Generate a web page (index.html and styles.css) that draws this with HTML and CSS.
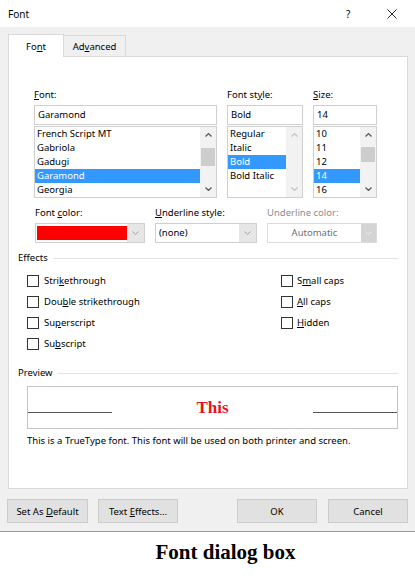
FILE: index.html
```html
<!DOCTYPE html>
<html>
<head>
<meta charset="utf-8">
<link rel="stylesheet" href="styles.css">
</head>
<body>
<div class="titlebar">
  <span class="title">Font</span>
  <span class="help">?</span>
  <span class="close"><svg width="10" height="10" viewBox="0 0 10 10"><path d="M0.5 0.5L9.5 9.5M9.5 0.5L0.5 9.5" stroke="#222" stroke-width="1" fill="none"/></svg></span>
</div>
<div class="dialog">
  <div class="tabs">
    <div class="tab active"><span>Fo<u>n</u>t</span></div>
    <div class="tab"><span>Ad<u>v</u>anced</span></div>
  </div>
  <div class="panel">
    <div class="font-grid">
      <div class="col">
        <div class="label"><u>F</u>ont:</div>
        <div class="input">Garamond</div>
        <div class="list">
          <div class="items">
            <div class="item">French Script MT</div>
            <div class="item">Gabriola</div>
            <div class="item">Gadugi</div>
            <div class="item sel">Garamond</div>
            <div class="item">Georgia</div>
          </div>
          <div class="scroll">
            <div class="sbtn"><svg width="7" height="4" viewBox="0 0 7 4"><path d="M0.5 3.5L3.5 0.6L6.5 3.5" fill="none" stroke="#555" stroke-width="1.3"/></svg></div>
            <div class="track"><div class="thumb thumb-font"></div></div>
            <div class="sbtn"><svg width="7" height="4" viewBox="0 0 7 4"><path d="M0.5 0.5L3.5 3.4L6.5 0.5" fill="none" stroke="#555" stroke-width="1.3"/></svg></div>
          </div>
        </div>
      </div>
      <div class="col">
        <div class="label">Font st<u>y</u>le:</div>
        <div class="input">Bold</div>
        <div class="list">
          <div class="items">
            <div class="item">Regular</div>
            <div class="item">Italic</div>
            <div class="item sel">Bold</div>
            <div class="item">Bold Italic</div>
          </div>
          <div class="scroll">
            <div class="sbtn"><svg width="7" height="4" viewBox="0 0 7 4"><path d="M0.5 3.5L3.5 0.6L6.5 3.5" fill="none" stroke="#c4c4c4" stroke-width="1.3"/></svg></div>
            <div class="track"></div>
            <div class="sbtn"><svg width="7" height="4" viewBox="0 0 7 4"><path d="M0.5 0.5L3.5 3.4L6.5 0.5" fill="none" stroke="#c4c4c4" stroke-width="1.3"/></svg></div>
          </div>
        </div>
      </div>
      <div class="col">
        <div class="label"><u>S</u>ize:</div>
        <div class="input">14</div>
        <div class="list">
          <div class="items">
            <div class="item">10</div>
            <div class="item">11</div>
            <div class="item">12</div>
            <div class="item sel">14</div>
            <div class="item">16</div>
            <div class="item-edge"></div>
          </div>
          <div class="scroll">
            <div class="sbtn"><svg width="7" height="4" viewBox="0 0 7 4"><path d="M0.5 3.5L3.5 0.6L6.5 3.5" fill="none" stroke="#555" stroke-width="1.3"/></svg></div>
            <div class="track"><div class="thumb thumb-size"></div></div>
            <div class="sbtn"><svg width="7" height="4" viewBox="0 0 7 4"><path d="M0.5 0.5L3.5 3.4L6.5 0.5" fill="none" stroke="#555" stroke-width="1.3"/></svg></div>
          </div>
        </div>
      </div>
    </div>

    <div class="color-grid">
      <div class="col">
        <div class="label">Font <u>c</u>olor:</div>
        <div class="combo">
          <div class="swatch"><div class="red"></div></div>
          <div class="arrow"><svg width="7" height="4" viewBox="0 0 7 4"><path d="M0.5 0.5L3.5 3.4L6.5 0.5" fill="none" stroke="#a0a0a0" stroke-width="1"/></svg></div>
        </div>
      </div>
      <div class="col">
        <div class="label"><u>U</u>nderline style:</div>
        <div class="combo">
          <div class="value">(none)</div>
          <div class="arrow"><svg width="7" height="4" viewBox="0 0 7 4"><path d="M0.5 0.5L3.5 3.4L6.5 0.5" fill="none" stroke="#a0a0a0" stroke-width="1"/></svg></div>
        </div>
      </div>
      <div class="col">
        <div class="label disabled">Underline color:</div>
        <div class="combo combo-disabled">
          <div class="value center">Automatic</div>
          <div class="arrow"><svg width="7" height="4" viewBox="0 0 7 4"><path d="M0.5 0.5L3.5 3.4L6.5 0.5" fill="none" stroke="#ebebeb" stroke-width="1"/></svg></div>
        </div>
      </div>
    </div>

    <div class="group effects">
      <div class="legend"><span>Effects</span><div class="rule"></div></div>
      <div class="checks">
        <div class="check"><span class="box"></span><span>Stri<u>k</u>ethrough</span></div>
        <div class="check"><span class="box"></span><span>S<u>m</u>all caps</span></div>
        <div class="check"><span class="box"></span><span>Dou<u>b</u>le strikethrough</span></div>
        <div class="check"><span class="box"></span><span><u>A</u>ll caps</span></div>
        <div class="check"><span class="box"></span><span>Su<u>p</u>erscript</span></div>
        <div class="check"><span class="box"></span><span><u>H</u>idden</span></div>
        <div class="check"><span class="box"></span><span>Su<u>b</u>script</span></div>
      </div>
    </div>

    <div class="group preview">
      <div class="legend"><span>Preview</span><div class="rule"></div></div>
      <div class="preview-box">
        <div class="pline"></div>
        <div class="ptext">This</div>
        <div class="pline"></div>
      </div>
      <div class="desc">This is a TrueType font. This font will be used on both printer and screen.</div>
    </div>
  </div>
  <div class="buttons">
    <div class="btn btn-default"><span>Set As <u>D</u>efault</span></div>
    <div class="btn btn-effects"><span>Text <u>E</u>ffects...</span></div>
    <div class="spacer"></div>
    <div class="btn"><span>OK</span></div>
    <div class="btn"><span>Cancel</span></div>
  </div>
</div>
<div class="caption">Font dialog box</div>
</body>
</html>
```

FILE: styles.css
```css
* { box-sizing: border-box; }
html, body { margin: 0; padding: 0; background: #fff; }
body {
  width: 415px;
  height: 578px;
  overflow: hidden;
  font-family: "Noto Sans", "Open Sans", sans-serif;
  font-size: 9.5px;
  color: #000;
}
u { text-decoration: underline; text-underline-offset: 1px; }

.titlebar {
  height: 27px;
  display: flex;
  align-items: center;
  background: #fff;
  padding-left: 8px;
}
.title { font-size: 10px; flex: 1; }
.help { font-size: 10px; width: 10px; margin-right: 31px; }
.close { width: 10px; height: 10px; margin-right: 18px; display: flex; }

.dialog {
  background: #f0f0f0;
  padding: 7px 0 8px 0;
  border-bottom: 1px solid #7f9dbf;
}
.tabs {
  display: flex;
  height: 22px;
  padding-left: 8px;
  align-items: flex-end;
}
.tab {
  height: 21px;
  width: 63px;
  border: 1px solid #d9d9d9;
  border-bottom: none;
  background: #f0f0f0;
  display: flex;
  align-items: center;
  justify-content: center;
  font-size: 9.5px;
  margin-left: -1px;
}
.tab.active {
  width: 56px;
  height: 23px;
  margin-left: 0;
  margin-bottom: -1px;
  background: #fff;
  position: relative;
  z-index: 1;
  padding-top: 1px;
}

.panel {
  margin-left: 8px;
  width: 400px;
  height: 433px;
  background: #fff;
  border: 1px solid #d9d9d9;
}

.font-grid {
  display: grid;
  grid-template-columns: 183px 76px 64px;
  column-gap: 10px;
  margin-top: 31px;
  padding-left: 25px;
}
.label {
  height: 14px;
  line-height: 14px;
  margin-bottom: 3px;
  white-space: nowrap;
}
.label.disabled { color: #8c8c8c; }
.input {
  height: 20px;
  border: 1px solid #cfcfcf;
  line-height: 18px;
  padding-left: 3px;
}
.list {
  margin-top: 1px;
  height: 72px;
  border: 1px solid #cfcfcf;
  display: flex;
  overflow: hidden;
}
.items { flex: 1; overflow: hidden; }
.item {
  height: 14px;
  line-height: 14px;
  padding-left: 2px;
  white-space: nowrap;
}
.item.sel { background: #3399ff; color: #fff; }
.item-edge { height: 2px; background: #3399ff; }
.scroll {
  width: 16px;
  background: #f2f2f2;
  display: flex;
  flex-direction: column;
}
.sbtn {
  height: 16px;
  display: flex;
  align-items: center;
  justify-content: center;
}
.track { flex: 1; }
.thumb { background: #cdcdcd; margin: 0 1px; }
.thumb-font { margin-top: 5px; height: 18px; }
.thumb-size { margin-top: 4px; height: 15px; }

.color-grid {
  display: grid;
  grid-template-columns: 110px 102px 110px;
  column-gap: 10px;
  margin-top: 8px;
  padding-left: 26px;
}
.combo {
  height: 20px;
  border: 1px solid #cfcfcf;
  display: flex;
  background: #fff;
}
.swatch { flex: 1; padding: 2px 0 2px 1px; }
.red { background: #ff0000; height: 100%; }
.value { flex: 1; line-height: 18px; padding-left: 3px; }
.value.center { text-align: center; padding-left: 0; color: #6f6f6f; }
.arrow {
  width: 17px;
  background: #e6e6e6;
  display: flex;
  align-items: center;
  justify-content: center;
}
.combo-disabled { border-color: #dcdcdc; }
.combo-disabled .arrow { background: #d4d4d4; width: 15px; }

.group { padding-left: 9px; padding-right: 9px; }
.effects { margin-top: 8px; }
.legend {
  display: flex;
  align-items: center;
  height: 14px;
  line-height: 14px;
}
.rule { flex: 1; height: 1px; background: #e3e3e3; margin-left: 5px; }
.checks {
  margin-top: 5px;
  padding-left: 9px;
  display: grid;
  grid-template-columns: 254px 1fr;
  grid-auto-rows: 21px;
}
.check { display: flex; align-items: center; }
.box {
  width: 12px;
  height: 12px;
  border: 1px solid #333;
  background: #fff;
  margin-right: 5px;
}
.check:nth-child(2n) .box { margin-right: 4px; }

.preview { margin-top: 12px; }
.preview-box {
  margin: 6px 0 0 9px;
  width: 371px;
  height: 43px;
  border: 1px solid #c4c4c4;
  display: grid;
  grid-template-columns: 84px 1fr 84px;
  align-items: start;
}
.pline { height: 26px; border-bottom: 1px solid #555; }
.ptext {
  text-align: center;
  font-family: "Liberation Serif", "Times New Roman", serif;
  font-weight: bold;
  font-size: 17px;
  color: #e8141c;
  line-height: 19px;
  padding-top: 11px;
}
.desc {
  margin-top: 5px;
  padding-left: 9px;
  height: 14px;
  line-height: 14px;
  white-space: nowrap;
}

.buttons {
  display: flex;
  margin-top: 10px;
  padding-left: 7px;
  padding-right: 7px;
  height: 24px;
  gap: 10px;
}
.btn {
  width: 80px;
  height: 24px;
  background: #e1e1e1;
  border: 1px solid #cccccc;
  display: flex;
  align-items: center;
  justify-content: center;
  white-space: nowrap;
}
.btn-default { width: 81px; }
.spacer { flex: 1; }
.buttons .btn:last-child { margin-left: 1px; }

.caption {
  text-align: center;
  font-family: "Liberation Serif", "Times New Roman", serif;
  font-weight: bold;
  font-size: 21px;
  line-height: 30px;
  padding-top: 5px;
  padding-left: 36px;
}
```
